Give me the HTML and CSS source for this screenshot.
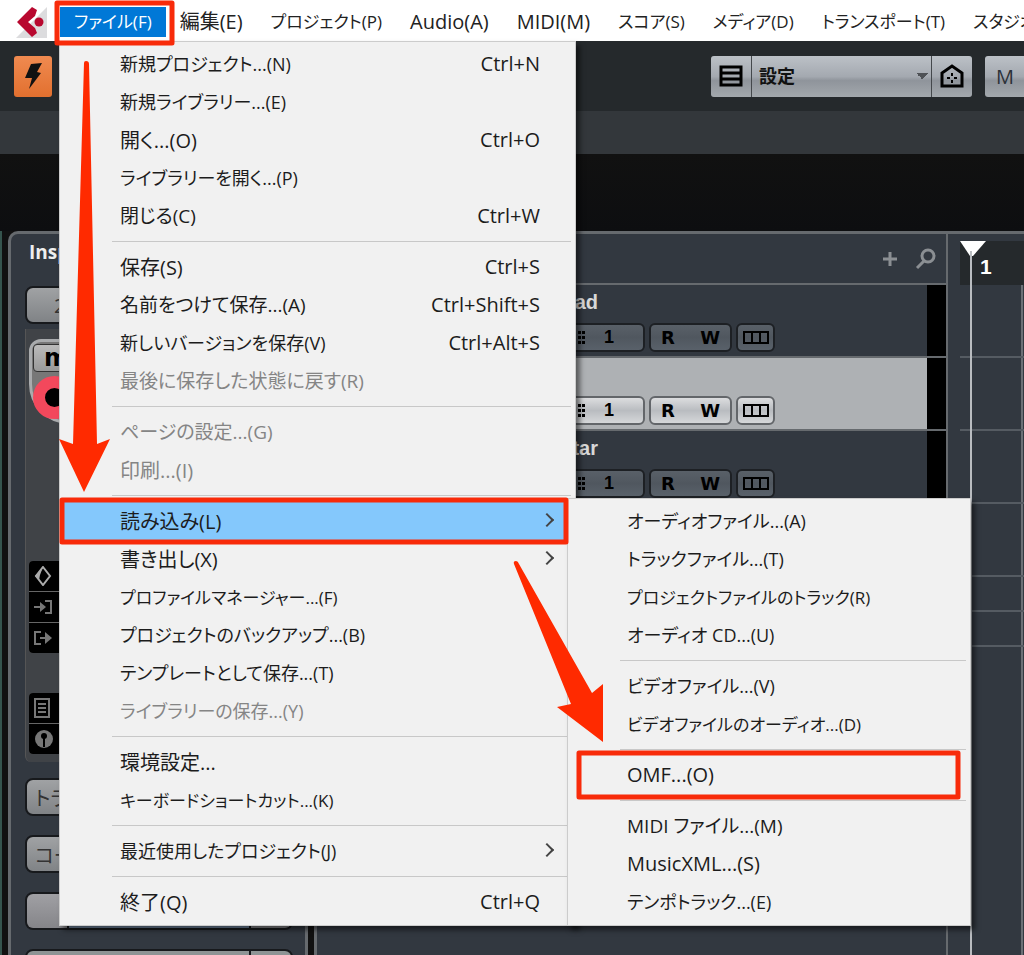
FILE: index.html
```html
<!DOCTYPE html>
<html lang="ja">
<head>
    <meta charset="UTF-8">
    <meta name="viewport" content="width=device-width, initial-scale=1.0">
    <title>Cubase</title>
    <link rel="stylesheet" href="styles.css">
</head>
<body>
    <nav class="menubar">
        <svg class="logo" width="31" height="31" viewBox="0 0 31 31">
            <path d="M0 31L31 0V31Z" fill="#dcdcde"/>
            <path d="M1 15L16 0L21 3L19 9L12 15L19 21L21 26L16 30Z" fill="#b8082f"/>
            <circle cx="23" cy="15" r="4.5" fill="#b8082f"/>
        </svg>
        <button class="menu-title kana active">ファイル(F)</button>
        <button class="menu-title kanji">編集(E)</button>
        <button class="menu-title kana">プロジェクト(P)</button>
        <button class="menu-title latin">Audio(A)</button>
        <button class="menu-title latin">MIDI(M)</button>
        <button class="menu-title kana">スコア(S)</button>
        <button class="menu-title kana">メディア(D)</button>
        <button class="menu-title kana">トランスポート(T)</button>
        <button class="menu-title kana">スタジオ(U)</button>
    </nav>

    <div class="toolbar">
        <button class="power" aria-label="Activate">
            <svg width="20" height="30" viewBox="0 0 20 30"><path d="M8 3L19 2L14 11L18 12L6 28L9 17L2 17Z" fill="#111"/></svg>
        </button>
        <div class="tool-group">
            <button class="tool" aria-label="List">
                <svg width="24" height="22" viewBox="0 0 24 22" fill="none" stroke="#000" stroke-width="3"><path d="M2 2H22V20H2ZM2 8H22M2 14H22"/></svg>
            </button>
            <select class="tool-select" aria-label="設定">
                <option>設定</option>
            </select>
            <button class="tool" aria-label="Home">
                <svg width="24" height="24" viewBox="0 0 24 24" fill="none" stroke="#000" stroke-width="3"><path d="M2 22V9L12 2L22 9V22Z"/><path d="M12 9V12M12 16V19M7 14H10M14 14H17" stroke-width="2"/></svg>
            </button>
        </div>
        <button class="tool tool-m">M</button>
    </div>
    <div class="info-line"></div>
    <div class="overview"></div>

    <main class="workspace">
        <section class="inspector">
            <h2>Inspector</h2>
            <button class="wide-button preset">2. Guitar</button>
            <div class="channel">
                <div class="channel-box">
                    <button class="mute">m</button>
                    <button class="record" aria-label="Record"></button>
                </div>
                <div class="routing">
                    <span class="cell"><svg width="18" height="20" viewBox="0 0 18 20"><path d="M9 1L16 10L9 19L2 10Z" fill="none" stroke="#aaa" stroke-width="2"/><path d="M9 1L1 10L5 14L6 9Z" fill="#aaa"/></svg></span>
                    <span class="cell"><svg width="18" height="14" viewBox="0 0 18 14" fill="none" stroke="#777" stroke-width="2"><path d="M0 7H9M11 1H17V13H11"/><path d="M6 2L12 7L6 12Z" fill="#777" stroke="none"/></svg></span>
                    <span class="cell"><svg width="18" height="14" viewBox="0 0 18 14" fill="none" stroke="#777" stroke-width="2"><path d="M7 1H1V13H7M6 7H13"/><path d="M11 1L18 7L11 13Z" fill="#777" stroke="none"/></svg></span>
                </div>
                <div class="routing">
                    <span class="cell"><svg width="16" height="20" viewBox="0 0 16 20" fill="none" stroke="#777" stroke-width="2"><path d="M1 1H15V19H1ZM4 6H12M4 10H12M4 14H12"/></svg></span>
                    <span class="cell"><svg width="20" height="20" viewBox="0 0 20 20"><circle cx="10" cy="10" r="9" fill="#777"/><circle cx="10" cy="7" r="3"/><path d="M10 8V18" stroke="#000" stroke-width="2"/></svg></span>
                </div>
            </div>
            <button class="wide-button">トラック</button>
            <button class="wide-button">コード</button>
            <div class="wide-button split"><span></span><span class="blue"></span><span></span></div>
            <div class="wide-button split pale"><span></span><span></span></div>
        </section>

        <section class="tracks">
            <header class="tracks-header">
                <button class="icon-button" aria-label="Add track">
                    <svg width="16" height="16" viewBox="0 0 16 16" stroke="#8b8f93" stroke-width="3"><path d="M8 1V15M1 8H15"/></svg>
                </button>
                <button class="icon-button" aria-label="Search">
                    <svg width="22" height="22" viewBox="0 0 22 22" fill="none" stroke="#8b8f93" stroke-width="3"><circle cx="13" cy="8" r="6"/><path d="M9 13L2 20"/></svg>
                </button>
            </header>
            <div class="track">
                <span class="track-name">Lead</span>
                <div class="chips">
                    <button class="chip chip-num"><svg width="12" height="14" viewBox="0 0 12 14"><path d="M0 0H3V3H0ZM5 0H8V3H5ZM9 0H12V3H9ZM0 5H3V8H0ZM5 5H8V8H5ZM9 5H12V8H9ZM0 10H3V13H0ZM5 10H8V13H5ZM9 10H12V13H9Z"/></svg>1</button>
                    <button class="chip chip-rw"><span>R</span><span>W</span></button>
                    <button class="chip chip-lanes" aria-label="Lanes"><svg width="26" height="13" viewBox="0 0 26 13" fill="none" stroke="#000" stroke-width="2"><path d="M1 1H25V12H1ZM9 1V12M17 1V12"/></svg></button>
                </div>
            </div>
            <div class="track selected">
                <span class="track-name"></span>
                <div class="chips">
                    <button class="chip chip-num"><svg width="12" height="14" viewBox="0 0 12 14"><path d="M0 0H3V3H0ZM5 0H8V3H5ZM9 0H12V3H9ZM0 5H3V8H0ZM5 5H8V8H5ZM9 5H12V8H9ZM0 10H3V13H0ZM5 10H8V13H5ZM9 10H12V13H9Z"/></svg>1</button>
                    <button class="chip chip-rw"><span>R</span><span>W</span></button>
                    <button class="chip chip-lanes" aria-label="Lanes"><svg width="26" height="13" viewBox="0 0 26 13" fill="none" stroke="#000" stroke-width="2"><path d="M1 1H25V12H1ZM9 1V12M17 1V12"/></svg></button>
                </div>
            </div>
            <div class="track">
                <span class="track-name">Guitar</span>
                <div class="chips">
                    <button class="chip chip-num"><svg width="12" height="14" viewBox="0 0 12 14"><path d="M0 0H3V3H0ZM5 0H8V3H5ZM9 0H12V3H9ZM0 5H3V8H0ZM5 5H8V8H5ZM9 5H12V8H9ZM0 10H3V13H0ZM5 10H8V13H5ZM9 10H12V13H9Z"/></svg>1</button>
                    <button class="chip chip-rw"><span>R</span><span>W</span></button>
                    <button class="chip chip-lanes" aria-label="Lanes"><svg width="26" height="13" viewBox="0 0 26 13" fill="none" stroke="#000" stroke-width="2"><path d="M1 1H25V12H1ZM9 1V12M17 1V12"/></svg></button>
                </div>
            </div>
        </section>

        <section class="timeline">
            <div class="ruler">1</div>
            <div class="lanes">
                <div class="lane"></div>
                <div class="lane"></div>
                <div class="lane"></div>
                <div class="lane"></div>
                <div class="lane small"></div>
                <div class="lane small"></div>
            </div>
            <svg class="playhead-top" width="26" height="15" viewBox="0 0 26 15"><path d="M0 0H26L13 15H10Z" fill="#fff"/></svg>
            <div class="playhead"></div>
        </section>
    </main>

    <!-- File menu -->
    <ul class="menu file-menu">
        <li><button>新規プロジェクト...(N)<kbd>Ctrl+N</kbd></button></li>
        <li><button>新規ライブラリー...(E)</button></li>
        <li><button class="kanji">開く...(O)<kbd>Ctrl+O</kbd></button></li>
        <li><button>ライブラリーを開く...(P)</button></li>
        <li><button class="mixed">閉じる(C)<kbd>Ctrl+W</kbd></button></li>
        <li class="separator"></li>
        <li><button class="kanji">保存(S)<kbd>Ctrl+S</kbd></button></li>
        <li><button class="mixed">名前をつけて保存...(A)<kbd>Ctrl+Shift+S</kbd></button></li>
        <li><button>新しいバージョンを保存(V)<kbd>Ctrl+Alt+S</kbd></button></li>
        <li><button class="mixed" disabled>最後に保存した状態に戻す(R)</button></li>
        <li class="separator"></li>
        <li><button class="mixed" disabled>ページの設定...(G)</button></li>
        <li><button class="kanji" disabled>印刷...(I)</button></li>
        <li class="separator"></li>
        <li class="open">
            <button class="kanji has-sub">読み込み(L)</button>
            <ul class="menu submenu">
                <li><button>オーディオファイル...(A)</button></li>
                <li><button>トラックファイル...(T)</button></li>
                <li><button class="kana">プロジェクトファイルのトラック(R)</button></li>
                <li><button>オーディオ CD...(U)</button></li>
                <li class="separator"></li>
                <li><button>ビデオファイル...(V)</button></li>
                <li><button class="kana">ビデオファイルのオーディオ...(D)</button></li>
                <li class="separator"></li>
                <li><button class="latin">OMF...(O)</button></li>
                <li class="separator"></li>
                <li><button class="mixed">MIDI ファイル...(M)</button></li>
                <li><button class="latin">MusicXML...(S)</button></li>
                <li><button>テンポトラック...(E)</button></li>
            </ul>
        </li>
        <li><button class="kanji has-sub">書き出し(X)</button></li>
        <li><button class="kana">プロファイルマネージャー...(F)</button></li>
        <li><button>プロジェクトのバックアップ...(B)</button></li>
        <li><button>テンプレートとして保存...(T)</button></li>
        <li><button disabled>ライブラリーの保存...(Y)</button></li>
        <li class="separator"></li>
        <li><button class="kanji">環境設定...</button></li>
        <li><button class="kana">キーボードショートカット...(K)</button></li>
        <li class="separator"></li>
        <li><button class="has-sub">最近使用したプロジェクト(J)</button></li>
        <li class="separator"></li>
        <li><button class="kanji">終了(Q)<kbd>Ctrl+Q</kbd></button></li>
    </ul>

    <!-- Red guide marks -->
    <svg class="marks" width="1024" height="800" viewBox="0 0 1024 800">
        <g fill="none" stroke="#f82b0a" stroke-width="5" stroke-linejoin="round">
            <rect x="57" y="3" width="115" height="40"/>
            <rect x="62" y="500" width="504" height="42"/>
            <rect x="579" y="753" width="379" height="44"/>
        </g>
        <g fill="#ff2a00">
            <path d="M84 63Q84 61 86 61Q89 61 89 64L97 444L110 439L84 492L59 439L73 444Z"/>
            <path d="M514 564Q513 561 516 561Q518 561 519 564L592 693L603 684L603 742L557 707L571 704Z"/>
        </g>
    </svg>
</body>
</html>
```
FILE: styles.css
```css
* {
    box-sizing: border-box;
}

body {
    display: flex;
    flex-direction: column;
    position: relative;
    height: 100vh;
    margin: 0;
    overflow: hidden;
    background: #111;
    font-family: "Open Sans", "Noto Sans CJK JP", sans-serif;
    font-size: 18px;
    font-feature-settings: "palt";
}

button,
select,
kbd {
    font: inherit;
    font-feature-settings: inherit;
    color: inherit;
}

button {
    border: none;
    padding: 0;
    background: none;
}

svg {
    flex: none;
}

/* text sizes by script */
.kana {
    font-size: 17px;
}

.mixed {
    font-size: 19px;
}

.kanji,
.latin {
    font-size: 20px;
}

/* menu bar */
.menubar {
    display: flex;
    flex: none;
    align-items: center;
    height: 41px;
    padding: 3px 0 0 16px;
    overflow: hidden;
    background: #fff;
}

.logo {
    margin-right: 13px;
}

.menu-title {
    flex: none;
    height: 30px;
    padding: 0 14px;
    line-height: 28px;
    color: #222;
    white-space: nowrap;
}

.menu-title.active {
    background: #0078d7;
    color: #fff;
}

/* toolbar */
.toolbar {
    display: flex;
    flex: none;
    align-items: center;
    height: 70px;
    padding-left: 14px;
    background: #25292c;
    overflow: hidden;
}

.power {
    display: flex;
    flex: none;
    align-items: center;
    justify-content: center;
    width: 38px;
    height: 41px;
    border-radius: 3px;
    background: linear-gradient(#f08a50, #e2702f);
}

.tool-group {
    display: flex;
    flex: none;
    gap: 1px;
    width: 261px;
    height: 41px;
    margin: 0 13px 0 659px;
    border-radius: 3px;
    overflow: hidden;
    background: #44484c;
}

.tool,
.tool-select {
    height: 41px;
    border: none;
    background: linear-gradient(#bcc1c7, #a4a9b0 50%, #8f949b 60%, #a3a8ad);
}

.tool {
    display: flex;
    align-items: center;
    justify-content: center;
    width: 40px;
}

.tool-select {
    flex: 1;
    padding: 0 7px;
    appearance: none;
    color: #111;
    font-weight: 600;
    background: linear-gradient(to bottom left, #4f5256 50%, transparent 50%) right 9px center / 6px 6px no-repeat,
        linear-gradient(to bottom right, #4f5256 50%, transparent 50%) right 3px center / 6px 6px no-repeat,
        linear-gradient(#bcc1c7, #a4a9b0 50%, #8f949b 60%, #a3a8ad);
}

.tool-m {
    flex: 1 0 40px;
    border-radius: 3px 0 0 3px;
    color: #2c3238;
    font-size: 20px;
}

.info-line {
    flex: none;
    height: 43px;
    background: #33373b;
}

.overview {
    flex: none;
    height: 77px;
    background: linear-gradient(#111, #0d0e10);
}

/* workspace */
.workspace {
    display: flex;
    flex: 1;
    min-height: 0;
    padding-left: 6px;
    border-left: 2px solid #35544d;
    overflow: hidden;
}

.inspector {
    flex: none;
    width: 300px;
    padding: 6px 12px 0 14px;
    border: 3px solid #666a6e;
    border-bottom: none;
    border-radius: 10px 0 0 0;
    background: #323840;
    overflow: hidden;
}

.inspector h2 {
    margin: 0 0 22px 4px;
    font-size: 19px;
    line-height: 24px;
    color: #eee;
}

.wide-button {
    display: flex;
    align-items: center;
    width: 268px;
    height: 38px;
    margin-bottom: 19px;
    padding-left: 8px;
    border: 2px solid #17191c;
    border-radius: 8px;
    background: linear-gradient(#a0a2a4, #808386);
    color: #333;
    font-size: 20px;
}

.preset {
    padding-left: 27px;
    margin-bottom: 5px;
}

.channel {
    height: 433px;
    margin-bottom: 16px;
    padding: 10px 0 0 3px;
    border-left: 1px solid #555;
    border-radius: 0 0 0 6px;
    background: #404347;
}

.channel-box {
    width: 100px;
    height: 85px;
    margin-bottom: 137px;
    padding: 2px 1px;
    border: 3px solid #a9abad;
    border-radius: 12px 12px 40px 40px;
    background: #777;
}

.mute {
    display: block;
    width: 60px;
    height: 28px;
    padding-left: 10px;
    border: 1px solid #333;
    border-radius: 4px;
    background: linear-gradient(#bbb, #999);
    color: #000;
    font: bold 24px/24px "DejaVu Sans", sans-serif;
    text-align: left;
}

.record {
    width: 43px;
    height: 43px;
    margin-top: 4px;
    border: 12px solid #f3485c;
    border-radius: 50%;
    background: #000;
}

.routing {
    display: grid;
    gap: 1px;
    width: 100px;
    margin-bottom: 40px;
    border-radius: 4px;
    overflow: hidden;
    background: #666;
}

.cell {
    display: flex;
    align-items: center;
    height: 30px;
    padding-left: 5px;
    background: #000;
}

.split {
    gap: 2px;
    padding: 0;
    overflow: hidden;
    background: #17191c;
}

.split span {
    flex: 0 0 40px;
    height: 34px;
    background: linear-gradient(#a0a0a4, #858589);
}

.split .blue {
    flex: 1;
    background: #70869f;
}

.split.pale span {
    background: #8e9495;
}

.split.pale span:first-child {
    flex: 1;
}

.tracks {
    flex: none;
    width: 634px;
    margin-left: 6px;
    border: solid #666a6e;
    border-width: 3px 2px 0 3px;
    background: #323840;
}

.tracks-header {
    display: flex;
    align-items: center;
    justify-content: flex-end;
    gap: 17px;
    height: 49px;
    padding-right: 9px;
}

.icon-button {
    display: flex;
}

.track {
    height: 73px;
    border-top: 2px solid #666a6e;
    background: linear-gradient(90deg, transparent 610px, #000 610px 629px);
}

.track.selected {
    background: linear-gradient(90deg, #aeb1b4 610px, #000 610px 629px);
}

.track-name {
    display: block;
    width: 281px;
    height: 34px;
    color: #d8d8d8;
    font: bold 20px/34px "Liberation Sans", sans-serif;
    text-align: right;
}

.chips {
    display: flex;
    gap: 4px;
    padding-left: 234px;
}

.chip {
    display: flex;
    align-items: center;
    height: 29px;
    margin-top: 4px;
    border: 2px solid #1d2024;
    border-radius: 6px;
    background: linear-gradient(#596068, #50575f 50%, #59616a);
    color: #000;
    font: bold 18px "Liberation Sans", sans-serif;
}

.selected .chip {
    border-color: #63666a;
    background: linear-gradient(#dcdddf, #b9bcc0 50%, #d5d7d9);
}

.chip-num {
    gap: 19px;
    width: 94px;
    padding-left: 20px;
}

.chip-rw {
    justify-content: space-between;
    width: 83px;
    padding: 0 10px;
    font-family: "DejaVu Sans", sans-serif;
}

.chip-lanes {
    justify-content: center;
    width: 39px;
}

.timeline {
    display: flex;
    flex: 1;
    flex-direction: column;
    position: relative;
    padding: 10px 0 0 12px;
    background: linear-gradient(#666a6e, #666a6e) 0 0 / 100% 3px no-repeat, #323840;
}

.ruler {
    flex: none;
    height: 44px;
    padding: 14px 0 0 20px;
    background: #25292c;
    color: #fff;
    font: bold 21px/24px "Liberation Sans", sans-serif;
}

.lanes {
    flex: 1;
    background: linear-gradient(#6b7076, #6b7076) 61px 0 / 2px 100% no-repeat;
}

.lane {
    height: 73px;
    border-bottom: 2px solid #555b62;
}

.lane.small {
    height: 35px;
}

.playhead-top {
    position: absolute;
    top: 10px;
    left: 12px;
}

.playhead {
    position: absolute;
    top: 20px;
    bottom: 0;
    left: 22px;
    width: 2px;
    background: #b9bcc0;
}

/* menus */
.menu {
    margin: 0;
    padding: 3px 0 4px;
    list-style: none;
    border: 1px solid #ccc;
    background: #f1f1f1;
    color: #1c1c1c;
    box-shadow: 4px 4px 5px rgba(0, 0, 0, 0.5);
    white-space: nowrap;
}

.menu button {
    display: flex;
    align-items: center;
    width: 100%;
    height: 38px;
    padding: 0 35px 2px 60px;
    text-align: left;
}

.menu button:disabled {
    color: #858585;
}

.menu kbd {
    margin-left: auto;
    font-size: 20px;
}

.menu .separator {
    height: 13px;
    padding: 6px 4px 0 52px;
}

.separator::before {
    content: "";
    display: block;
    height: 1px;
    background: #c8c8c8;
}

.menu .has-sub::after {
    content: "";
    width: 8px;
    height: 8px;
    margin: 0 -12px 0 auto;
    border: solid #444;
    border-width: 2px 2px 0 0;
    transform: rotate(45deg);
}

.file-menu {
    position: absolute;
    top: 41px;
    left: 59px;
    width: 517px;
}

.open {
    position: relative;
}

.open > .has-sub {
    background: #84c8fc;
}

.submenu {
    position: absolute;
    top: -4px;
    left: 507px;
    width: 404px;
}

.submenu button {
    padding-left: 59px;
}

.marks {
    position: absolute;
    top: 0;
    left: 0;
    pointer-events: none;
}
```
